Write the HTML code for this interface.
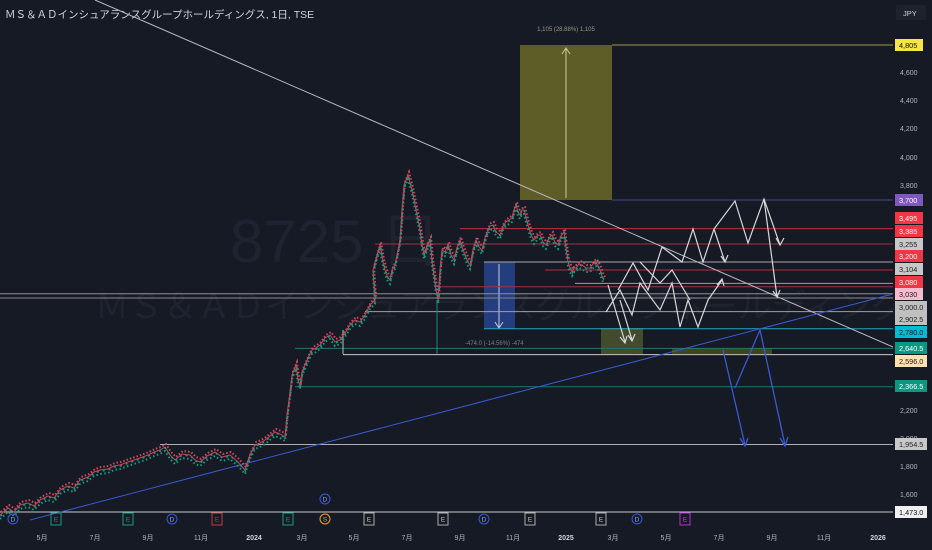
<!DOCTYPE html>
<html><head><meta charset="utf-8"><style>
html,body{margin:0;padding:0;background:#161a25;width:932px;height:550px;overflow:hidden}
svg{display:block}
text{font-family:"Liberation Sans","Noto Sans CJK JP",sans-serif}
</style></head><body>
<svg width="932" height="550" viewBox="0 0 932 550" xmlns="http://www.w3.org/2000/svg">
<defs>
<polyline id="pp" fill="none" points="0,515 8,508 14,512 20,505 28,503 34,506 40,500 48,496 54,498 60,490 68,486 74,488 80,480 88,477 94,472 100,470 108,469 114,466 120,465 128,462 134,460 140,458 148,455 154,452 160,450 165,447 170,455 175,460 182,454 190,455 195,460 200,462 207,456 215,452 222,457 230,455 238,462 245,470 250,455 255,445 260,443 265,440 270,436 275,432 280,434 285,437 287,415 289,400 292,375 294,370 296,365 298,380 300,385 302,372 305,365 308,358 312,350 316,348 320,345 325,338 330,335 335,342 340,340 345,333 350,325 355,320 360,322 365,315 370,305 375,300 373,270 377,255 380,245 383,262 385,270 388,278 390,280 392,270 395,265 398,250 400,240 402,210 404,185 406,180 408,175 410,183 412,190 414,200 416,210 418,220 420,230 422,245 424,255 427,246 430,240 432,262 434,275 436,290 438,300 440,270 442,250 445,252 448,245 451,255 454,260 457,248 460,240 463,250 465,255 468,262 470,265 473,250 476,240 479,247 482,250 485,238 488,230 490,226 493,225 496,232 500,235 503,226 506,222 509,220 512,218 514,210 516,205 518,212 520,215 522,210 524,210 526,218 528,225 531,235 534,240 537,236 540,235 543,242 546,245 549,238 552,235 555,242 558,245 561,236 564,232 566,248 568,262 570,268 572,272 574,268 576,268 579,264 582,265 586,268 590,268 593,264 596,262 598,266 600,270 602,276 604,280"/>
</defs>
<rect width="932" height="550" fill="#161a25"/>
<!-- watermarks -->
<text x="230" y="262" font-size="60" fill="#1f2330">8725 日</text>
<text x="95" y="318" font-size="34" fill="#1f232f">ＭＳ＆ＡＤインシュアランスグループホールディングス</text>
<!-- title -->
<text x="5" y="18" font-size="10.5" fill="#d1d4dc">ＭＳ＆ＡＤインシュアランスグループホールディングス, 1日, TSE</text>
<!-- boxes -->
<rect x="520" y="45" width="92" height="155" fill="#6b6a28" opacity="0.85"/>
<line x1="566" y1="198" x2="566" y2="48" stroke="#c9c9a0" stroke-width="1"/>
<path d="M562,54 L566,48 L570,54" fill="none" stroke="#c9c9a0"/>
<text x="566" y="31" font-size="6" fill="#9a9a80" text-anchor="middle">1,105 (28.88%) 1,105</text>
<line x1="612" y1="45" x2="893" y2="45" stroke="#a09c40" stroke-width="1"/>
<rect x="484" y="262" width="31" height="67" fill="#27448e" opacity="0.85"/>
<line x1="499" y1="264" x2="499" y2="327" stroke="#c8cce0"/>
<path d="M495,322 L499,328 L503,322" fill="none" stroke="#c8cce0"/>
<text x="465" y="345" font-size="6" fill="#7a7f8c">-474.0 (-14.56%) -474</text>
<rect x="601" y="328" width="42" height="26" fill="#4a5530" opacity="0.85"/>
<rect x="672" y="348" width="100" height="6" fill="#4a5020" opacity="0.8"/>
<!-- horizontal lines -->
<g stroke-width="1" fill="none">
<line x1="0" y1="293.8" x2="932" y2="293.8" stroke="#8a8e98"/>
<line x1="0" y1="512" x2="895" y2="512" stroke="#c8c8c8"/>
<line x1="612" y1="200" x2="893" y2="200" stroke="#4a4a8a"/>
<line x1="460" y1="228.6" x2="893" y2="228.6" stroke="#c03040"/>
<line x1="375" y1="244" x2="893" y2="244" stroke="#a03040"/>
<line x1="484" y1="262" x2="893" y2="262" stroke="#a8a8a8"/>
<line x1="545" y1="270" x2="893" y2="270" stroke="#b03040"/>
<line x1="575" y1="283.4" x2="893" y2="283.4" stroke="#a0a0a0"/>
<line x1="437" y1="286.8" x2="893" y2="286.8" stroke="#a03040"/>
<line x1="0" y1="298" x2="893" y2="298" stroke="#888"/>
<line x1="365" y1="311.6" x2="893" y2="311.6" stroke="#a0a0a0"/>
<line x1="484" y1="328.8" x2="893" y2="328.8" stroke="#1fa8c0"/>
<line x1="295" y1="348.4" x2="893" y2="348.4" stroke="#1a7a6a"/>
<line x1="343" y1="354.6" x2="893" y2="354.6" stroke="#c8c8c8"/>
<line x1="295" y1="386.8" x2="893" y2="386.8" stroke="#1a7a6a"/>
<line x1="160" y1="444.5" x2="893" y2="444.5" stroke="#b0b0b0"/>
<line x1="437" y1="300" x2="437" y2="354" stroke="#1a8a7a"/>
<line x1="343" y1="330" x2="343" y2="354" stroke="#bbb"/>
</g>
<!-- trendlines -->
<line x1="95" y1="0" x2="893" y2="347" stroke="#b8b8c0" stroke-width="1"/>
<line x1="30" y1="520" x2="893" y2="294" stroke="#3a5ad0" stroke-width="1"/>
<!-- price (candle texture) -->
<use href="#pp" stroke="#1a9a80" stroke-width="2" stroke-dasharray="1.5 2.5" transform="translate(0,4)"/>
<use href="#pp" stroke="#d04a5c" stroke-width="2" stroke-dasharray="1.5 2" transform="translate(1,-3)"/>
<use href="#pp" stroke="#c8455a" stroke-width="1"/>
<use href="#pp" stroke="#1a9a80" stroke-width="1.5" stroke-dasharray="2 4" transform="translate(0.5,1)"/>
<!-- white zigzags -->
<g fill="none" stroke="#d8d8d8" stroke-width="1.2">
<polyline points="618,290 633,263 648,290 662,247 682,262 693,229 703,262 714,229 735,201 748,243 764,199 780,245"/>
<path d="M776,238 L780,245 L784,238"/>
<polyline points="714,229 725,262"/><path d="M721,256 L725,262 L728,255"/>
<polyline points="764,199 777,297"/><path d="M773,291 L777,297 L780,290"/>
<polyline points="606,312 620,290 632,315 640,283 660,310 672,283 680,327 688,300 698,327 708,300 722,280"/>
<path d="M717,285 L722,279 L724,286"/>
<polyline points="608,285 625,342"/><path d="M620,337 L625,343 L627,336"/>
<polyline points="620,300 632,340"/><path d="M628,335 L632,341 L635,334"/>
<polyline points="640,262 660,283 672,270 690,300"/>
</g>
<g fill="none" stroke="#3a5ad0" stroke-width="1.3">
<polyline points="723,350 745,445"/><path d="M740,438 L745,446 L748,438"/>
<polyline points="735,388 760,330 785,445"/><path d="M780,438 L785,446 L788,437"/>
</g>
<!-- price axis -->
<rect x="893" y="0" width="39" height="550" fill="#161a25"/>
<rect x="896" y="5" width="30" height="15" rx="2" fill="#1e222d"/>
<text x="903" y="16" font-size="7.5" fill="#d1d4dc">JPY</text>
<g font-size="7" fill="#b2b5be">
<text x="900" y="75">4,600</text><text x="900" y="103">4,400</text><text x="900" y="131">4,200</text>
<text x="900" y="160">4,000</text><text x="900" y="188">3,800</text>
<text x="900" y="413">2,200</text><text x="900" y="441">2,000</text><text x="900" y="469">1,800</text><text x="900" y="497">1,600</text>
</g>
<g font-size="7.3">
<rect x="895" y="39" width="28" height="12" fill="#f5e642"/><text x="899" y="48" fill="#111">4,805</text>
<rect x="895" y="194" width="28" height="12" fill="#7e57c2"/><text x="899" y="203" fill="#fff">3,700</text>
<rect x="895" y="212" width="28" height="12" fill="#f23645"/><text x="899" y="221" fill="#fff">3,495</text>
<rect x="895" y="225" width="28" height="12" fill="#f23645"/><text x="899" y="234" fill="#fff">3,385</text>
<rect x="895" y="238" width="28" height="12" fill="#c8c8c8"/><text x="899" y="247" fill="#222">3,255</text>
<rect x="895" y="250" width="28" height="12" fill="#f23645"/><text x="899" y="259" fill="#fff">3,200</text>
<rect x="895" y="263" width="28" height="12" fill="#c8c8c8"/><text x="899" y="272" fill="#222">3,104</text>
<rect x="895" y="276" width="28" height="12" fill="#f23645"/><text x="899" y="285" fill="#fff">3,080</text>
<rect x="895" y="288" width="28" height="12" fill="#f8bbd0"/><text x="899" y="297" fill="#222">3,030</text>
<rect x="895" y="301" width="32" height="12" fill="#c0c0c0"/><text x="899" y="310" fill="#222">3,000.0</text>
<rect x="895" y="313" width="32" height="12" fill="#c0c0c0"/><text x="899" y="322" fill="#222">2,902.5</text>
<rect x="895" y="326" width="32" height="12" fill="#00bcd4"/><text x="899" y="335" fill="#111">2,780.0</text>
<rect x="895" y="342" width="32" height="12" fill="#089981"/><text x="899" y="351" fill="#fff">2,640.5</text>
<rect x="895" y="355" width="32" height="12" fill="#ffe0b2"/><text x="899" y="364" fill="#222">2,596.0</text>
<rect x="895" y="380" width="32" height="12" fill="#089981"/><text x="899" y="389" fill="#fff">2,366.5</text>
<rect x="895" y="438" width="32" height="12" fill="#c8c8c8"/><text x="899" y="447" fill="#222">1,954.5</text>
<rect x="895" y="506" width="32" height="12" fill="#f0f0f0"/><text x="899" y="515" fill="#111">1,473.0</text>
</g>
<!-- events -->
<g font-size="6.5" text-anchor="middle" fill="none" stroke-width="1">
<circle cx="13" cy="519" r="5" stroke="#3a5ad0"/><text x="13" y="521.5" fill="#8aa0ff" stroke="none">D</text>
<rect x="51" y="513" width="10" height="12" stroke="#1a9a80"/><text x="56" y="521.5" fill="#1a9a80" stroke="none">E</text>
<rect x="123" y="513" width="10" height="12" stroke="#1a9a80"/><text x="128" y="521.5" fill="#1a9a80" stroke="none">E</text>
<circle cx="172" cy="519" r="5" stroke="#3a5ad0"/><text x="172" y="521.5" fill="#8aa0ff" stroke="none">D</text>
<rect x="212" y="513" width="10" height="12" stroke="#c83a44"/><text x="217" y="521.5" fill="#c83a44" stroke="none">E</text>
<rect x="283" y="513" width="10" height="12" stroke="#1a9a80"/><text x="288" y="521.5" fill="#1a9a80" stroke="none">E</text>
<circle cx="325" cy="499" r="5" stroke="#3a5ad0"/><text x="325" y="501.5" fill="#8aa0ff" stroke="none">D</text>
<circle cx="325" cy="519" r="5" stroke="#f0a030"/><text x="325" y="521.5" fill="#f0a030" stroke="none">S</text>
<rect x="364" y="513" width="10" height="12" stroke="#aaa"/><text x="369" y="521.5" fill="#ccc" stroke="none">E</text>
<rect x="438" y="513" width="10" height="12" stroke="#aaa"/><text x="443" y="521.5" fill="#ccc" stroke="none">E</text>
<circle cx="484" cy="519" r="5" stroke="#3a5ad0"/><text x="484" y="521.5" fill="#8aa0ff" stroke="none">D</text>
<rect x="525" y="513" width="10" height="12" stroke="#aaa"/><text x="530" y="521.5" fill="#ccc" stroke="none">E</text>
<rect x="596" y="513" width="10" height="12" stroke="#aaa"/><text x="601" y="521.5" fill="#ccc" stroke="none">E</text>
<circle cx="637" cy="519" r="5" stroke="#3a5ad0"/><text x="637" y="521.5" fill="#8aa0ff" stroke="none">D</text>
<rect x="680" y="513" width="10" height="12" stroke="#b030d0"/><text x="685" y="521.5" fill="#c040e0" stroke="none">E</text>
</g>
<!-- time axis -->
<g font-size="7" fill="#b2b5be" text-anchor="middle">
<text x="42" y="540">5月</text><text x="95" y="540">7月</text><text x="148" y="540">9月</text><text x="201" y="540">11月</text>
<text x="254" y="540" font-weight="bold" fill="#d1d4dc">2024</text><text x="302" y="540">3月</text><text x="354" y="540">5月</text>
<text x="407" y="540">7月</text><text x="460" y="540">9月</text><text x="513" y="540">11月</text>
<text x="566" y="540" font-weight="bold" fill="#d1d4dc">2025</text><text x="613" y="540">3月</text><text x="666" y="540">5月</text>
<text x="719" y="540">7月</text><text x="772" y="540">9月</text><text x="824" y="540">11月</text>
<text x="878" y="540" font-weight="bold" fill="#d1d4dc">2026</text>
</g>
</svg>
</body></html>
